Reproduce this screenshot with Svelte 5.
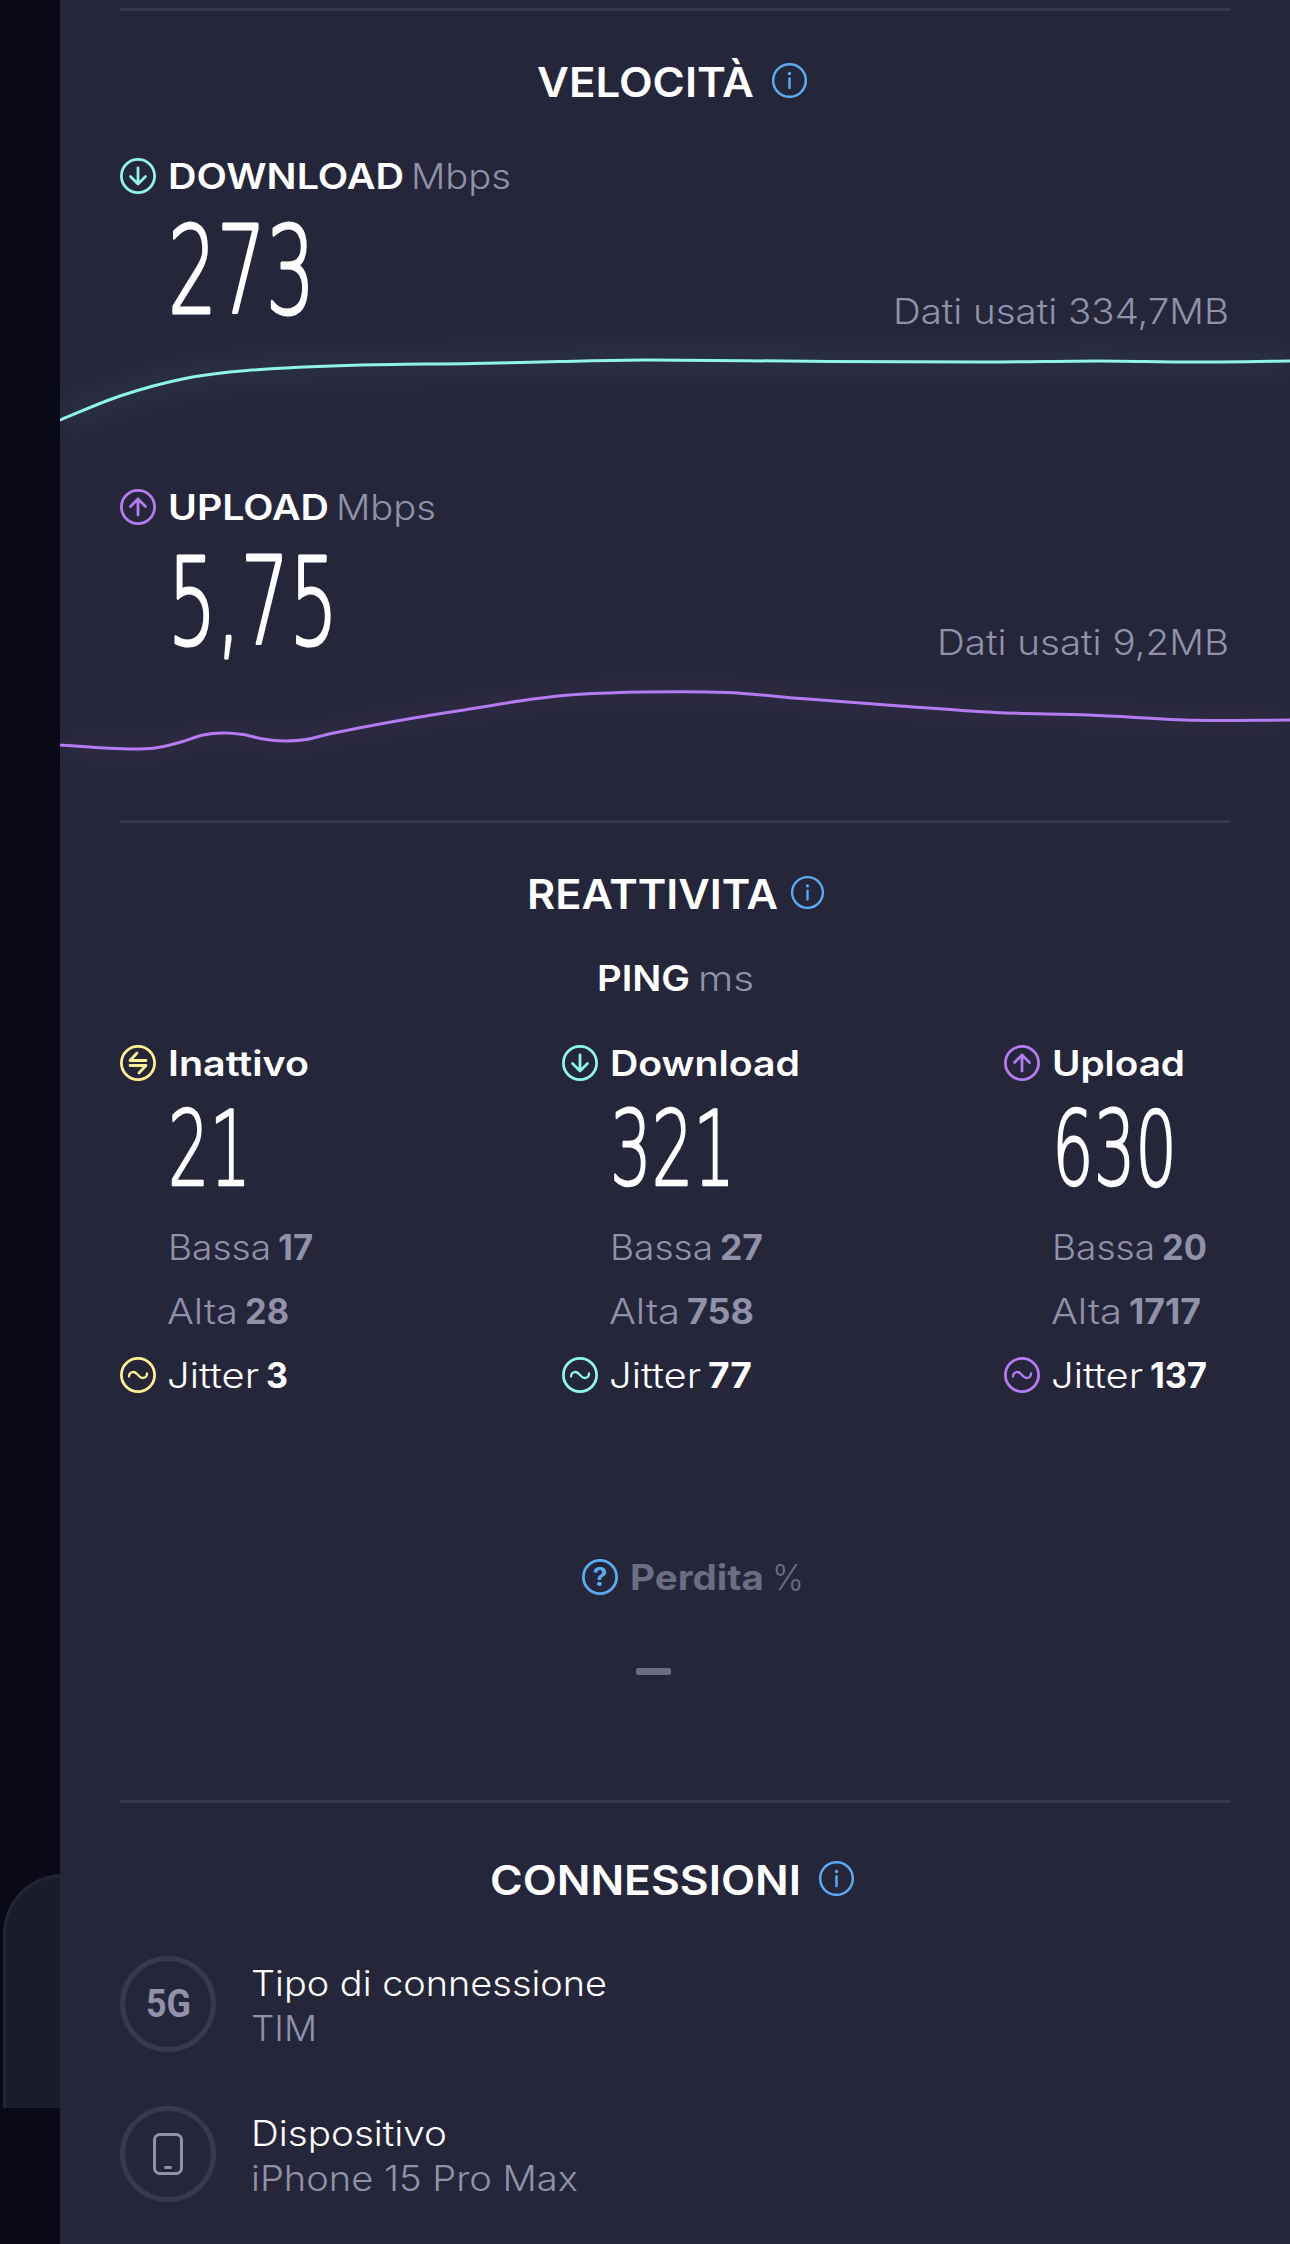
<script>
    const teal = '#8df5ea';
    const violet = '#b57bf2';
    const yellow = '#fff096';

    const speeds = [
        {
            name: 'DOWNLOAD', nameWidth: 232, icon: 'down', color: teal,
            value: '273', valueWidth: 134, used: 'Dati usati 334,7MB', usedWidth: 332,
            line: [[0, 96], [60, 72], [125, 54.5], [187, 46.5], [294, 41.3], [413, 39.5], [500, 37.5], [585, 36], [750, 37.3], [935, 38], [1037, 37], [1132, 38], [1230, 37]]
        },
        {
            name: 'UPLOAD', nameWidth: 157, icon: 'up', color: violet,
            value: '5,75', valueWidth: 157, used: 'Dati usati 9,2MB', usedWidth: 288,
            line: [[0, 90], [35, 92.5], [68, 94], [95, 93], [121, 87], [143, 80], [163, 78], [183, 79.5], [203, 84], [224, 86], [246, 84.5], [269, 79], [331, 67], [413, 53.5], [471, 44.3], [516, 39.5], [585, 37], [667, 37.5], [741, 43.5], [840, 51], [935, 57.5], [1029, 60], [1136, 65.3], [1230, 65]]
        }
    ];

    const pings = [
        { name: 'Inattivo', nameWidth: 137, icon: 'idle', color: yellow, value: '21', valueWidth: 74, low: ['17', 33], high: ['28', 42], jitter: ['3', 20] },
        { name: 'Download', nameWidth: 186, icon: 'down', color: teal, value: '321', valueWidth: 116, low: ['27', 41], high: ['758', 65], jitter: ['77', 42] },
        { name: 'Upload', nameWidth: 129, icon: 'up', color: violet, value: '630', valueWidth: 116, low: ['20', 43], high: ['1717', 70], jitter: ['137', 55] }
    ];

    // smooth curve through all points, control points kept within each step
    function curve(p) {
        const slope = p.map((_, i) => {
            const a = p[i - 1] || p[i];
            const b = p[i + 1] || p[i];
            return (b[1] - a[1]) / (b[0] - a[0]);
        });
        let d = `M${p[0]}`;
        for (let i = 0; i < p.length - 1; i++) {
            const [x1, y1] = p[i];
            const [x2, y2] = p[i + 1];
            const h = (x2 - x1) / 3;
            d += ` C${x1 + h},${y1 + slope[i] * h} ${x2 - h},${y2 - slope[i + 1] * h} ${x2},${y2}`;
        }
        return d;
    }
</script>

<!-- text fitted to a fixed ink width, baseline at the bottom of the box -->
{#snippet fit(text, width, kind, left = 3, right = 1)}
    <svg class="fit {kind}" {width} height="36"><text x={-left} y="36" textLength={width + left + right} lengthAdjust="spacingAndGlyphs">{text}</text></svg>
{/snippet}

{#snippet icon(name, color)}
    <svg class="icon" viewBox="0 0 36 36" stroke={color}>
        <circle cx="18" cy="18" r="16.6" />
        {#if name === 'down'}
            <path d="M18 10v16M10.5 18.5l7.5 7.5l7.5-7.5" />
        {:else if name === 'up'}
            <path d="M18 26V10M10.5 17.5l7.5-7.5l7.5 7.5" />
        {:else if name === 'idle'}
            <path d="M26 15.5H10l7-7.5M10 20.5h16l-7 7.5" />
        {:else if name === 'wave'}
            <path class="thin" d="M9 19.5c0-4.5 5-6 8-2.5l2 2c3 3.5 8 2 8-2.5" />
        {:else if name === 'help'}
            <text x="18" y="27" fill={color}>?</text>
        {/if}
    </svg>
{/snippet}

{#snippet info(size)}
    <svg class="info" width={size} height={size} viewBox="0 0 35 35">
        <circle cx="17.5" cy="17.5" r="16.3" />
        <path d="M17.5 15.5v9.5" />
        <circle class="dot" cx="17.5" cy="10.5" r="1.7" />
    </svg>
{/snippet}

<div class="page">
    <div class="behind"></div>
    <main>
        <section class="speed">
            <h2>{@render fit('VELOCITÀ', 216, 'title', 1, 0)}{@render info(35)}</h2>
            {#each speeds as s}
                <div class="test">
                    <div class="row">
                        {@render icon(s.icon, s.color)}
                        {@render fit(s.name, s.nameWidth, 'strong')}
                        {@render fit('Mbps', 96, 'unit')}
                    </div>
                    <div class="result">
                        {@render fit(s.value, s.valueWidth, 'big', 6, 7)}
                        {@render fit(s.used, s.usedWidth, 'muted')}
                    </div>
                    <svg class="chart" viewBox="0 0 1230 160" stroke={s.color}>
                        <path class="glow" d={curve(s.line)} />
                        <path d={curve(s.line)} />
                    </svg>
                </div>
            {/each}
        </section>

        <section class="reactivity">
            <h2>{@render fit('REATTIVITA', 248, 'title', 3, 0)}{@render info(33)}</h2>
            <h3>{@render fit('PING', 89, 'strong')}{@render fit('ms', 53, 'unit', 3, 0)}</h3>
            <div class="pings">
                {#each pings as p}
                    <div class="ping">
                        <div class="row">{@render icon(p.icon, p.color)}{@render fit(p.name, p.nameWidth, 'strong')}</div>
                        <div class="value">{@render fit(p.value, p.valueWidth, 'medium', 5, 4)}</div>
                        <div class="detail">{@render fit('Bassa', 99, 'muted')}{@render fit(p.low[0], p.low[1], 'muted bold', 1)}</div>
                        <div class="detail high">{@render fit('Alta', 69, 'muted', 1)}{@render fit(p.high[0], p.high[1], 'muted bold', 1)}</div>
                        <div class="row jitter">
                            {@render icon('wave', p.color)}
                            {@render fit('Jitter', 90, 'plain', 1)}
                            {@render fit(p.jitter[0], p.jitter[1], 'plain bold', 1)}
                        </div>
                    </div>
                {/each}
            </div>
            <div class="loss">
                <div class="row">{@render icon('help', '#5aaaf2')}{@render fit('Perdita', 131, 'dim bold', 2)}{@render fit('%', 28, 'dim', 2, 2)}</div>
                <div class="dash"></div>
            </div>
        </section>

        <section class="connections">
            <h2>{@render fit('CONNESSIONI', 307, 'title', 2, 2)}{@render info(35)}</h2>
            <div class="item">
                <div class="badge">{@render fit('5G', 43, 'net', 1)}</div>
                <div class="lines">
                    {@render fit('Tipo di connessione', 355, 'plain', 1, 0)}
                    {@render fit('TIM', 63, 'muted', 1, 2)}
                </div>
            </div>
            <div class="item device">
                <div class="badge">
                    <svg class="phone" viewBox="0 0 30 42">
                        <rect x="1.5" y="1.5" width="27" height="39" rx="5.5" />
                        <path d="M12.5 34.5h5" />
                    </svg>
                </div>
                <div class="lines">
                    {@render fit('Dispositivo', 193, 'plain', 1, 2)}
                    {@render fit('iPhone 15 Pro Max', 324, 'muted', 1, 2)}
                </div>
            </div>
        </section>
    </main>
</div>

<style>
    :global(body) {
        background: #0a0a17;
    }

    .page {
        position: relative;
        height: 2244px;
        overflow: hidden;
        font-family: Inter, "Open Sans", sans-serif;
    }

    .behind {
        position: absolute;
        left: 3px;
        top: 1874px;
        width: 120px;
        height: 234px;
        box-sizing: border-box;
        background: #1a1b2b;
        border: 3px solid #232435;
        border-bottom: 0;
        border-top-left-radius: 60px;
    }

    main {
        position: relative;
        margin-left: 60px;
        height: 2244px;
        padding-top: 8px;
        box-sizing: border-box;
        background: #252639;
    }

    section {
        position: relative;
        box-sizing: border-box;
    }

    section::before {
        content: '';
        display: block;
        height: 3px;
        margin: 0 60px;
        background: #37374b;
    }

    .speed {
        height: 812px;
    }

    .reactivity {
        height: 980px;
    }

    h2, h3 {
        display: flex;
        margin: 0;
    }

    h2 {
        gap: 18px;
        height: 36px;
        margin: 50px 0 0 478px;
    }

    .reactivity h2 {
        gap: 13px;
        margin: 50px 0 0 470px;
    }

    .connections h2 {
        gap: 20px;
        margin: 56px 0 0 432px;
    }

    h3 {
        gap: 12px;
        margin: 46px 0 0 540px;
    }

    .fit {
        display: block;
        flex: none;
        overflow: visible;
        font-size: 35px;
        font-weight: 300;
        fill: #9192a9;
    }

    .title {
        font-size: 41px;
        font-weight: 600;
        fill: #fff;
    }

    .strong {
        font-weight: 600;
        fill: #fff;
    }

    .plain {
        font-weight: 300;
        fill: #fff;
    }

    .bold {
        font-weight: 650;
    }

    .dim {
        fill: #6c6c82;
    }

    .big, .medium {
        font-family: "DejaVu Sans", sans-serif;
        font-weight: 200;
        fill: #fff;
        stroke: #fff;
        stroke-width: 3.2;
        stroke-linejoin: round;
    }

    .big {
        font-size: 121px;
    }

    .medium {
        font-size: 104px;
        stroke-width: 2.4;
    }

    .net {
        font-family: Roboto, sans-serif;
        font-size: 38px;
        font-weight: 700;
    }

    .icon {
        flex: none;
        width: 36px;
        height: 36px;
        fill: none;
        stroke-width: 2.8;
        stroke-linecap: round;
        stroke-linejoin: round;
    }

    .icon .thin {
        stroke-width: 2.3;
    }

    .icon text {
        font-size: 26px;
        font-weight: 700;
        text-anchor: middle;
        stroke: none;
    }

    .info {
        flex: none;
        margin-top: 2px;
        fill: none;
        stroke: #5aaaf2;
        stroke-width: 2.5;
        stroke-linecap: round;
    }

    .reactivity .info {
        margin-top: 3px;
    }

    .info .dot {
        fill: #5aaaf2;
        stroke: none;
    }

    .row {
        display: flex;
        height: 36px;
    }

    .row .fit {
        margin-top: -5px;
    }

    .row .icon + .fit {
        margin-left: 15px;
    }

    .row .fit + .fit {
        margin-left: 11px;
    }

    .test {
        height: 331px;
        margin-top: 61px;
    }

    .test + .test {
        margin-top: 0;
    }

    .test .row {
        padding-left: 60px;
    }

    .result {
        display: flex;
        justify-content: space-between;
        align-items: flex-end;
        height: 130px;
        padding: 0 62px 0 114px;
    }

    .result .big {
        margin-bottom: 11px;
    }

    .chart {
        display: block;
        width: 1230px;
        height: 160px;
        fill: none;
        stroke-width: 3;
        overflow: hidden;
    }

    .glow {
        stroke-width: 36;
        opacity: 0.04;
        filter: blur(12px);
    }

    .pings {
        display: flex;
        gap: 242px;
        margin: 54px 0 0 60px;
    }

    .ping {
        width: 200px;
        flex: none;
    }

    .value {
        margin: 68px 0 0 53px;
    }

    .detail {
        display: flex;
        gap: 9px;
        margin: 39px 0 0 51px;
    }

    .detail.high {
        margin: 28px 0 0 48px;
    }

    .jitter {
        margin-top: 33px;
    }

    .row.jitter .icon + .fit {
        margin-left: 12px;
    }

    .row.jitter .fit + .fit {
        margin-left: 9px;
    }

    .loss {
        margin: 166px 0 0 522px;
    }

    .loss .row .icon + .fit {
        margin-left: 14px;
    }

    .dash {
        width: 35px;
        height: 7px;
        margin: 73px 0 0 54px;
        border-radius: 2px;
        background: #6c6c82;
    }

    .item {
        display: flex;
        gap: 36px;
        margin: 61px 0 0 60px;
    }

    .item.device {
        margin-top: 54px;
    }

    .badge {
        display: flex;
        align-items: center;
        justify-content: center;
        width: 96px;
        height: 96px;
        box-sizing: border-box;
        flex: none;
        border: 5px solid #38394d;
        border-radius: 50%;
    }

    .badge .fit {
        margin-top: -10px;
    }

    .phone {
        width: 30px;
        height: 42px;
        fill: none;
        stroke: #9192a9;
        stroke-width: 3;
        stroke-linecap: round;
    }

    .lines {
        display: flex;
        flex-direction: column;
        gap: 9px;
        padding-top: 4px;
    }
</style>
